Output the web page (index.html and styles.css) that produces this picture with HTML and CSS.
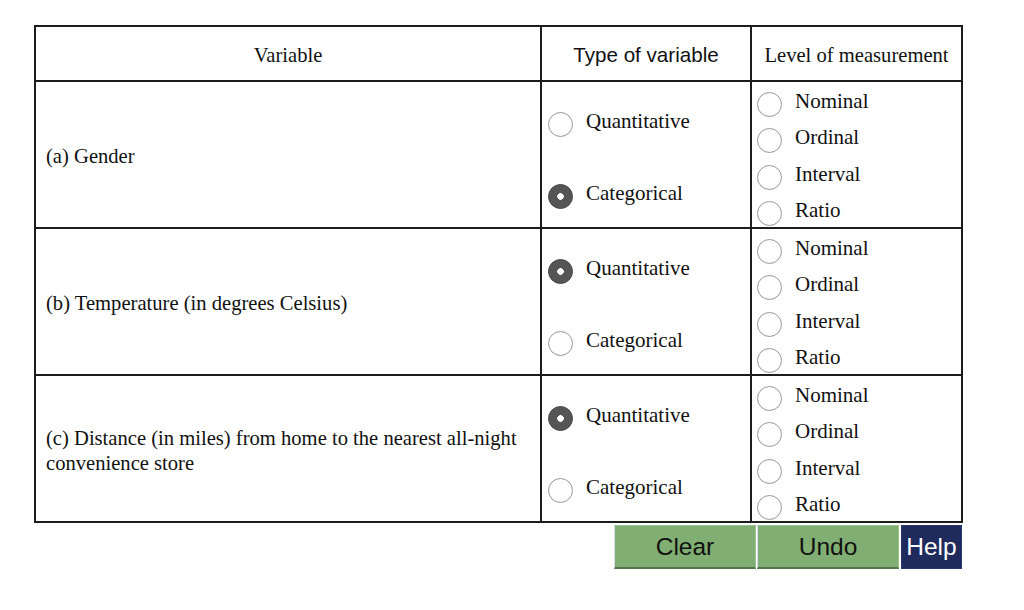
FILE: index.html
```html
<!DOCTYPE html>
<html>
<head>
<meta charset="utf-8">
<link rel="stylesheet" href="styles.css">
</head>
<body>
<div class="page">
  <table class="grid">
    <colgroup>
      <col class="c1"><col class="c2"><col class="c3">
    </colgroup>
    <thead>
      <tr class="head">
        <th class="serif">Variable</th>
        <th class="sans">Type of variable</th>
        <th class="serif">Level of measurement</th>
      </tr>
    </thead>
    <tbody>
      <tr class="row">
        <td class="var">(a) Gender</td>
        <td>
          <div class="type">
            <label class="opt"><input type="radio" name="ta"><span>Quantitative</span></label>
            <label class="opt"><input type="radio" name="ta" checked><span>Categorical</span></label>
          </div>
        </td>
        <td>
          <div class="level">
            <label class="opt"><input type="radio" name="la"><span>Nominal</span></label>
            <label class="opt"><input type="radio" name="la"><span>Ordinal</span></label>
            <label class="opt"><input type="radio" name="la"><span>Interval</span></label>
            <label class="opt"><input type="radio" name="la"><span>Ratio</span></label>
          </div>
        </td>
      </tr>
      <tr class="row">
        <td class="var">(b) Temperature (in degrees Celsius)</td>
        <td>
          <div class="type">
            <label class="opt"><input type="radio" name="tb" checked><span>Quantitative</span></label>
            <label class="opt"><input type="radio" name="tb"><span>Categorical</span></label>
          </div>
        </td>
        <td>
          <div class="level">
            <label class="opt"><input type="radio" name="lb"><span>Nominal</span></label>
            <label class="opt"><input type="radio" name="lb"><span>Ordinal</span></label>
            <label class="opt"><input type="radio" name="lb"><span>Interval</span></label>
            <label class="opt"><input type="radio" name="lb"><span>Ratio</span></label>
          </div>
        </td>
      </tr>
      <tr class="row">
        <td class="var">(c) Distance (in miles) from home to the nearest all-night convenience store</td>
        <td>
          <div class="type">
            <label class="opt"><input type="radio" name="tc" checked><span>Quantitative</span></label>
            <label class="opt"><input type="radio" name="tc"><span>Categorical</span></label>
          </div>
        </td>
        <td>
          <div class="level">
            <label class="opt"><input type="radio" name="lc"><span>Nominal</span></label>
            <label class="opt"><input type="radio" name="lc"><span>Ordinal</span></label>
            <label class="opt"><input type="radio" name="lc"><span>Interval</span></label>
            <label class="opt"><input type="radio" name="lc"><span>Ratio</span></label>
          </div>
        </td>
      </tr>
    </tbody>
  </table>
  <div class="actions">
    <button class="btn green clear">Clear</button>
    <button class="btn green undo">Undo</button>
    <button class="btn navy help">Help</button>
  </div>
</div>
</body>
</html>
```

FILE: styles.css
```css
html, body {
  margin: 0;
  padding: 0;
  background: #ffffff;
}

.page {
  padding: 25px 0 0 34px;
  width: 930px;
  font-family: "Liberation Serif", "Times New Roman", serif;
  color: #111;
}

.grid {
  border-collapse: collapse;
  width: 929px;
  table-layout: fixed;
}

.c1 { width: 506px; }
.c2 { width: 210px; }
.c3 { width: 211px; }

.grid th,
.grid td {
  border: 2px solid #1c1c1c;
  padding: 0;
  vertical-align: middle;
}

.grid .head th {
  height: 50px;
  padding-top: 3px;
  font-weight: normal;
  font-size: 20.6px;
  text-align: center;
}

.serif {
  font-family: "Liberation Serif", "Times New Roman", serif;
}

.sans {
  font-family: "Liberation Sans", Arial, sans-serif;
}

.row td {
  height: 143px;
}

.grid .row td.var {
  height: 141px;
  font-size: 20.6px;
  line-height: 25px;
  padding: 4px 10px 0 10px;
}

.type {
  display: grid;
  grid-template-rows: 60px 60px;
  row-gap: 12px;
  align-content: start;
  padding: 11px 0 0 6px;
  height: 143px;
  box-sizing: border-box;
}

.level {
  display: grid;
  grid-template-rows: repeat(4, 36.5px);
  align-content: start;
  padding: 3px 0 0 5px;
  height: 143px;
  box-sizing: border-box;
}

.opt {
  display: flex;
  align-items: center;
  gap: 13px;
  font-size: 21px;
  line-height: 24px;
}

.opt span {
  margin-top: -7px;
}

.opt input {
  appearance: none;
  -webkit-appearance: none;
  margin: 0;
  width: 25px;
  height: 25px;
  border-radius: 50%;
  border: 1.6px solid #9a9a9a;
  background: radial-gradient(circle at 50% 40%, #ffffff 60%, #efefef 100%);
  box-sizing: border-box;
  flex: none;
}

.opt input:checked {
  border-color: #4a4a4a;
  background: radial-gradient(circle, #ffffff 0 3px, #555555 3.6px);
}

.actions {
  display: flex;
  justify-content: flex-end;
  gap: 1px;
  margin-top: 2px;
  width: 928px;
}

.btn {
  height: 44px;
  font-family: "Liberation Sans", Arial, sans-serif;
  font-size: 24.5px;
  padding: 0;
  cursor: pointer;
  box-sizing: border-box;
}

.green {
  background: #81ae72;
  color: #111;
  border: 1px solid #9cc190;
  border-left-color: #d8dcf0;
  border-bottom: 2px solid #56734c;
}

.clear { width: 142px; }
.undo { width: 142px; }

.navy {
  background: #1e2b5c;
  color: #ffffff;
  border: 1px solid #2a3a70;
  margin-left: 1px;
}

.help { width: 61px; }
```
